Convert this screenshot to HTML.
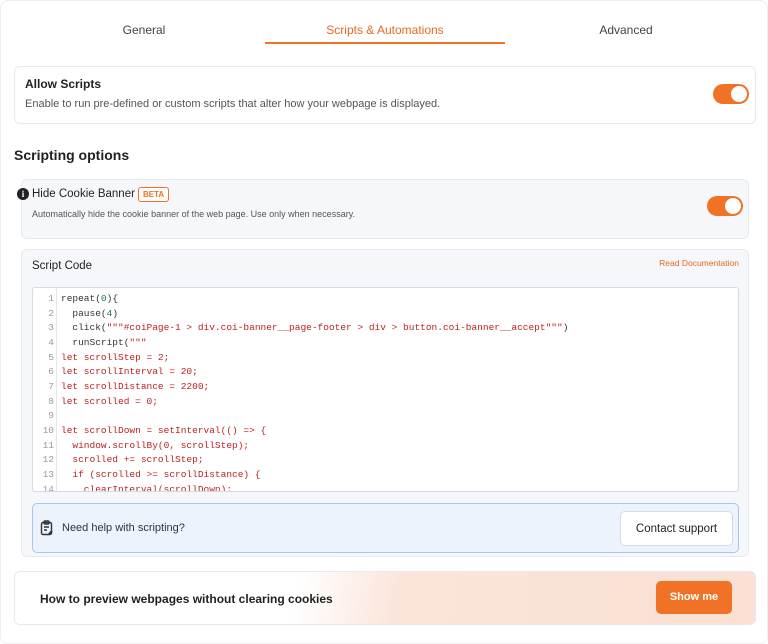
<!DOCTYPE html>
<html><head><style>
*{box-sizing:border-box;margin:0;padding:0}
body{width:768px;height:644px;background:#fff;font-family:"Liberation Sans",sans-serif;color:#222;position:relative;overflow:hidden}
.abs{position:absolute}
.tab{top:23px;font-size:12px;color:#444;text-align:center;width:240px}
.card{border:1px solid #e6e9ef;border-radius:6px}
.tog{width:36px;height:20px;border-radius:10px;background:#f07226;position:absolute}
.tog::after{content:"";position:absolute;right:2px;top:2px;width:16px;height:16px;border-radius:50%;background:#fff}
pre{font-family:"Liberation Mono",monospace;font-size:9.5px;line-height:14.67px;color:#b22;}
.ln{color:#999;text-align:right}
.k{color:#333}.n{color:#1a7a4a}
</style></head><body>
<div class="abs" style="left:0;top:0;width:768px;height:644px;border:1px solid #eee;border-radius:8px"></div>
<div class="abs tab" style="left:24px">General</div>
<div class="abs tab" style="left:265px;color:#e8691f">Scripts &amp; Automations</div>
<div class="abs tab" style="left:506px">Advanced</div>
<div class="abs" style="left:265px;top:42px;width:240px;height:2px;background:#f07226"></div>

<div class="abs card" style="left:14px;top:66px;width:742px;height:58px">
<div class="abs" style="left:10px;top:10px;font-size:12px;font-weight:bold">Allow Scripts</div>
<div class="abs" style="left:10px;top:31px;font-size:11px;color:#555">Enable to run pre-defined or custom scripts that alter how your webpage is displayed.</div>
<div class="tog" style="left:698px;top:17px"></div>
</div>

<div class="abs" style="left:14px;top:147px;font-size:14px;font-weight:bold">Scripting options</div>

<div class="abs card" style="left:21px;top:179px;width:728px;height:60px;background:#f6f7fa">
<div class="abs" style="left:10px;top:8px;font-size:11.5px">Hide Cookie Banner</div>
<div class="abs" style="left:116px;top:7px;font-size:8px;color:#f07226;border:1px solid #f07226;border-radius:3px;padding:2px 4px;font-weight:bold;background:#fff">BETA</div>
<div class="abs" style="left:10px;top:29px;font-size:9px;color:#555">Automatically hide the cookie banner of the web page. Use only when necessary.</div>
<div class="tog" style="left:685px;top:16px"></div>
</div>
<div class="abs" style="left:17px;top:188px;width:12px;height:12px;border-radius:50%;background:#222;color:#fff;font-size:9px;font-weight:bold;text-align:center;line-height:12px;font-family:'Liberation Serif',serif">i</div>

<div class="abs card" style="left:21px;top:249px;width:728px;height:308px;background:#f6f7fa">
<div class="abs" style="left:10px;top:10px;font-size:11.5px">Script Code</div>
<div class="abs" style="right:9px;top:8px;font-size:8.5px;color:#e8691f">Read Documentation</div>
</div>
<div class="abs" style="left:32px;top:287px;width:707px;height:205px;background:#fff;border:1px solid #d6dae2;border-radius:3px;overflow:hidden">
<div class="abs" style="left:0;top:0;width:24px;height:205px;border-right:1px solid #e4e6ea"></div>
<pre class="abs ln" style="left:0;top:4px;width:21px">1
2
3
4
5
6
7
8
9
10
11
12
13
14</pre>
<pre class="abs" style="left:28px;top:4px"><span class="k">repeat(<span class="n">0</span>){
  pause(<span class="n">4</span>)
  click(</span>"""#coiPage-1 &gt; div.coi-banner__page-footer &gt; div &gt; button.coi-banner__accept"""<span class="k">)
  runScript(</span>"""
let scrollStep = 2;
let scrollInterval = 20;
let scrollDistance = 2200;
let scrolled = 0;

let scrollDown = setInterval(() =&gt; {
  window.scrollBy(0, scrollStep);
  scrolled += scrollStep;
  if (scrolled &gt;= scrollDistance) {
    clearInterval(scrollDown);</pre>
</div>

<div class="abs" style="left:32px;top:503px;width:707px;height:50px;background:#edf3fd;border:1px solid #a9c6ef;border-radius:5px">
<svg class="abs" style="left:7px;top:16px" width="14" height="16" viewBox="0 0 14 16" fill="none" stroke="#333" stroke-width="1.4"><rect x="1.5" y="2.5" width="10" height="12" rx="1.5"/><rect x="4" y="1" width="5" height="3" rx="1"/><path d="M4 7h5M4 10h3"/><path d="M9 14l3-3" stroke-width="2"/></svg>
<div class="abs" style="left:29px;top:18px;font-size:11px;color:#333">Need help with scripting?</div>
<div class="abs" style="left:587px;top:7px;width:113px;height:35px;background:#fff;border:1px solid #d6dae2;border-radius:5px;font-size:11.5px;text-align:center;line-height:35px;color:#222">Contact support</div>
</div>

<div class="abs card" style="left:14px;top:571px;width:742px;height:54px;background:linear-gradient(100deg,#fff 0%,#fff 38%,#fbe4d9 52%,#fbe0d3 100%)">
<div class="abs" style="left:25px;top:20px;font-size:12px;font-weight:bold;color:#222">How to preview webpages without clearing cookies</div>
<div class="abs" style="left:641px;top:9px;width:76px;height:33px;background:#f07226;border-radius:5px;color:#fff;font-size:11px;font-weight:bold;text-align:center;line-height:33px">Show me</div>
</div>
</body></html>
